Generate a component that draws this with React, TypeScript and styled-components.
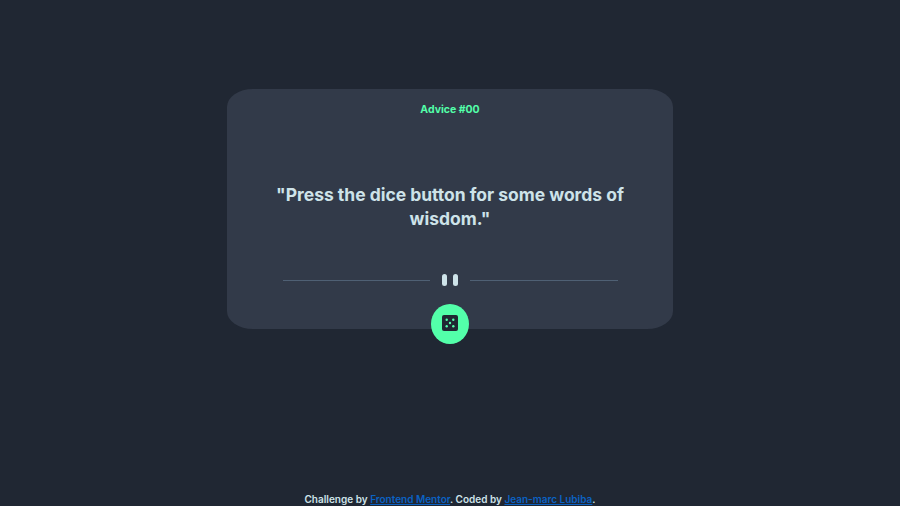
import React from "react";
import styled, { createGlobalStyle } from "styled-components";

const GlobalStyle = createGlobalStyle`
  html, body {
    margin: 0;
    height: 100%;
    overflow: hidden;
    background: #202733;
    font-family: Inter, "Noto Sans", "Liberation Sans", sans-serif;
  }
  #root {
    height: 100%;
  }
`;

const Page = styled.div`
  height: 506px;
  display: flex;
  flex-direction: column;
  align-items: center;
  padding-top: 89px;
  box-sizing: border-box;
`;

const Card = styled.main`
  position: relative;
  width: 446px;
  height: 240px;
  box-sizing: border-box;
  padding: 14px 40px 0;
  background: #323a49;
  border-radius: 26px / 18px;
  display: flex;
  flex-direction: column;
  align-items: center;
`;

const AdviceId = styled.h1`
  margin: 0;
  font-size: 10.5px;
  line-height: 13px;
  font-weight: 700;
  color: #53ffaa;
`;

const Quote = styled.p`
  margin: 67px 0 0;
  width: 100%;
  text-align: center;
  font-size: 17.5px;
  line-height: 24px;
  font-weight: 700;
  letter-spacing: -0.02px;
  color: #cee3e9;
`;

const Divider = styled.div`
  margin-top: 43px;
  width: 335px;
  height: 12px;
  display: flex;
  align-items: center;
  gap: 12px;
`;

const Line = styled.span`
  flex: 1;
  height: 1px;
  background: #4f6074;
`;

const PauseBar = styled.span`
  width: 5px;
  height: 12px;
  border-radius: 2.5px;
  background: #cee3e9;
`;

const Pause = styled.div`
  display: flex;
  gap: 6px;
`;

const DiceButton = styled.button`
  position: absolute;
  left: 204px;
  top: 215px;
  width: 38px;
  height: 40px;
  padding: 0 0 3px;
  border: none;
  border-radius: 50%;
  background: #53ffaa;
  display: flex;
  align-items: center;
  justify-content: center;
  cursor: pointer;
`;

const Footer = styled.footer`
  margin-top: auto;
  margin-bottom: -1px;
  height: 15px;
  font-size: 10px;
  line-height: 15px;
  font-weight: 600;
  color: #cee3e9;
  text-align: center;
  white-space: nowrap;
`;

const FooterLink = styled.a`
  color: #0b62c4;
  text-decoration: underline;
`;

const App: React.FC = () => (
  <>
    <GlobalStyle />
    <Page>
      <Card>
        <AdviceId>Advice #00</AdviceId>
        <Quote>"Press the dice button for some words of wisdom."</Quote>
        <Divider>
          <Line />
          <Pause>
            <PauseBar />
            <PauseBar />
          </Pause>
          <Line />
        </Divider>
        <DiceButton aria-label="Get advice">
          <svg width="16" height="16" viewBox="0 0 16 16">
            <rect width="16" height="16" rx="2" fill="#202733" />
            <circle cx="4.7" cy="4.7" r="1.2" fill="#53ffaa" />
            <circle cx="11.3" cy="4.7" r="1.2" fill="#53ffaa" />
            <circle cx="8" cy="8" r="1.2" fill="#53ffaa" />
            <circle cx="4.7" cy="11.3" r="1.2" fill="#53ffaa" />
            <circle cx="11.3" cy="11.3" r="1.2" fill="#53ffaa" />
          </svg>
        </DiceButton>
      </Card>
      <Footer>
        Challenge by <FooterLink href="#">Frontend Mentor</FooterLink>. Coded by{" "}
        <FooterLink href="#">Jean-marc Lubiba</FooterLink>.
      </Footer>
    </Page>
  </>
);

export default App;
